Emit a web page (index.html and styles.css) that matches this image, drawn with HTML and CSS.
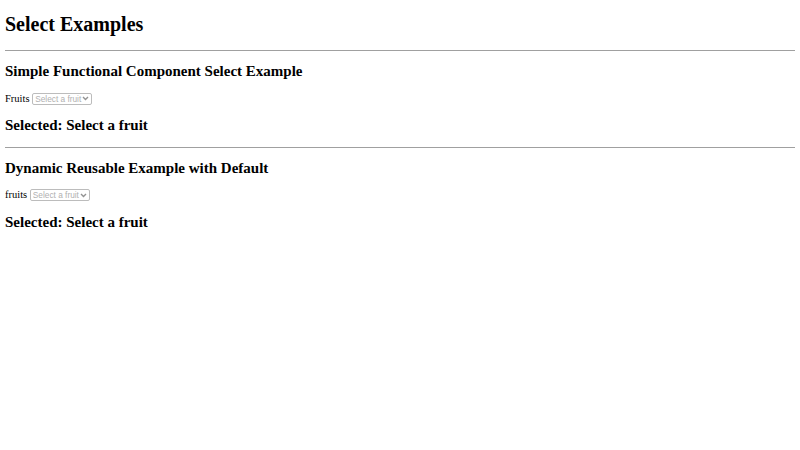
FILE: index.html
```html
<!DOCTYPE html>
<html>
<head>
<meta charset="utf-8">
<title>Select Examples</title>
<link rel="stylesheet" href="styles.css">
</head>
<body>
<h1 class="title">Select Examples</h1>
<hr class="rule">
<section class="example">
<h2 class="heading">Simple Functional Component Select Example</h2>
<label class="field">Fruits <select class="picker" disabled><option>Select a fruit</option></select></label>
<h2 class="heading">Selected: Select a fruit</h2>
</section>
<hr class="rule">
<section class="example">
<h2 class="heading">Dynamic Reusable Example with Default</h2>
<label class="field">fruits <select class="picker" disabled><option>Select a fruit</option></select></label>
<h2 class="heading">Selected: Select a fruit</h2>
</section>
</body>
</html>
```
FILE: styles.css
```css
html {
  margin: 0;
  padding: 0;
}
body {
  margin: 0 5px;
  padding: 0;
  font-family: "Liberation Serif", "Times New Roman", serif;
  font-size: 10.5px;
  color: #000;
  background: #fff;
}
.title {
  font-size: 20px;
  margin: 13.4px 0;
}
.heading {
  font-size: 15px;
  margin: 12.45px 0;
}
.rule {
  margin: 5px 0;
  border: 0;
  border-top: 1px solid #a0a0a0;
  height: 0;
}
.field {
  display: block;
}
.picker {
  -webkit-appearance: none;
  appearance: none;
  font-family: "Liberation Sans", Arial, sans-serif;
  font-size: 8.3px;
  width: 60px;
  height: 12px;
  padding: 0 0 0 2px;
  border: 1px solid #a0a0a0;
  border-radius: 2px;
  background-color: #fff;
  background-image: url("data:image/svg+xml,%3Csvg xmlns='http://www.w3.org/2000/svg' width='7' height='5' viewBox='0 0 7 5'%3E%3Cpath d='M1 1l2.5 2.5L6 1' fill='none' stroke='%23666' stroke-width='1.4'/%3E%3C/svg%3E");
  background-repeat: no-repeat;
  background-position: right 2px center;
  background-size: 7px 5px;
  color: #8f8f8f;
  vertical-align: baseline;
}
```
